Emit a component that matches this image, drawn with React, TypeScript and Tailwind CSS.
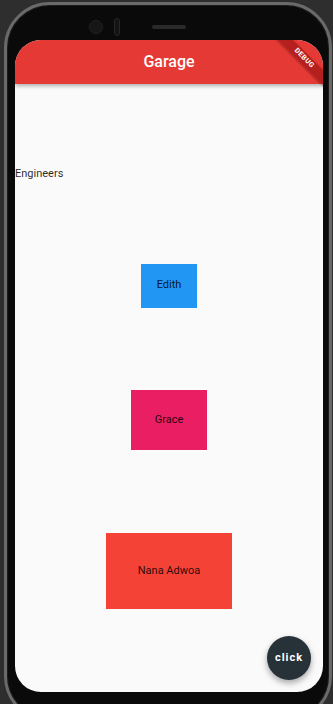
import React from 'react';

const engineers = [
  { name: 'Edith', box: 'w-[56px] h-[44px] bg-[#2196f3]' },
  { name: 'Grace', box: 'w-[76px] h-[60px] bg-[#e91e63]' },
  { name: 'Nana Adwoa', box: 'w-[126px] h-[76px] bg-[#f44336]' },
];

const App = () => {
  return (
    <div
      className="w-[333px] h-[704px] overflow-hidden bg-[#2e2e2e] pl-[4px] pt-[2px]"
      style={{ fontFamily: 'Roboto, "Noto Sans", sans-serif' }}
    >
      {/* Phone body */}
      <div className="relative w-[328px] h-[720px] rounded-[46px] border-[3px] border-[#6a6a6a] bg-[#0a0a0a] shadow-[inset_0_0_0_1px_#1c1c1c]">
        {/* camera + speaker */}
        <div className="absolute left-[82px] top-[15px] w-[14px] h-[14px] rounded-full bg-[#161618] border border-[#222]" />
        <div className="absolute left-[107px] top-[13px] w-[6px] h-[18px] rounded-full bg-[#141414] border border-[#262626]" />
        <div className="absolute left-[145px] top-[20px] w-[34px] h-[4px] rounded-full bg-[#2a2a2a]" />

        {/* Screen */}
        <div className="relative ml-[8px] mt-[35px] w-[308px] h-[652px] rounded-[26px] overflow-hidden bg-[#fafafa] flex flex-col">
          {/* App bar */}
          <div className="h-[44px] shrink-0 bg-[#e53935] flex items-center justify-center shadow-[0_2px_4px_rgba(0,0,0,0.3)] z-10">
            <span className="text-white text-[16px] font-medium">Garage</span>
          </div>

          {/* Body */}
          <div className="flex-1 flex flex-col items-center justify-evenly">
            <div className="self-start text-[11px] leading-[14px] text-black/85">Engineers</div>
            {engineers.map((e) => (
              <div key={e.name} className={`${e.box} flex items-center justify-center`}>
                <span className="text-[11px] text-black/85">{e.name}</span>
              </div>
            ))}
          </div>

          {/* Debug banner */}
          <div className="absolute right-[-27px] top-[13px] w-[92px] h-[11px] rotate-45 bg-[#a11616]/70 flex items-center justify-center z-20 shadow-[0_1px_2px_rgba(0,0,0,0.3)]">
            <span className="text-white text-[7px] font-bold leading-none tracking-[0.5px]">DEBUG</span>
          </div>

          {/* FAB */}
          <div className="absolute right-[12px] bottom-[12px] w-[44px] h-[44px] rounded-full bg-[#263238] flex items-center justify-center shadow-[0_3px_6px_rgba(0,0,0,0.35)]">
            <span className="text-white text-[11px] font-bold tracking-[1px]">click</span>
          </div>
        </div>
      </div>
    </div>
  );
};

export default App;
